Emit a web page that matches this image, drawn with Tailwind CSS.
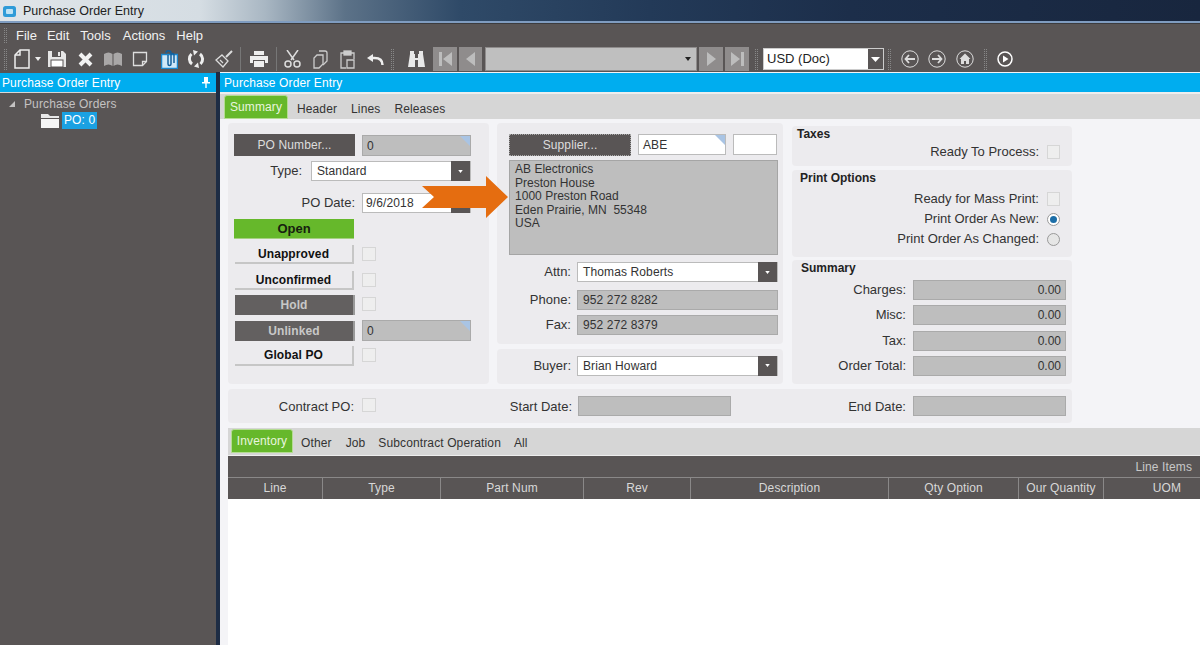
<!DOCTYPE html>
<html lang="en">
<head>
<meta charset="UTF-8">
<title>Purchase Order Entry</title>
<script src="https://cdn.jsdelivr.net/npm/@tailwindcss/browser@4"></script>
</head>
<body class="w-[1200px] h-[645px] overflow-hidden relative bg-[#595555] font-['Liberation_Sans',Arial,sans-serif] text-[12px] text-[#333] tracking-[.12px]">

<!-- title bar -->
<div class="h-[23px] pt-[1px] flex items-center bg-[linear-gradient(90deg,#dfe4e8_0px,#d5dde3_200px,#a9b7c3_265px,#5c7288_345px,#2f4a68_460px,#233a58_650px,#1c2e4a_850px,#18263e_1200px)] border-b-2 border-b-[#7f9cc0]">
  <svg class="ml-[3px] w-[13px] h-[11px]" viewBox="0 0 13 11"><rect width="13" height="11" rx="2.5" fill="#2f9bd8"/><rect x="3" y="3" width="7" height="5" rx="1" fill="#bfe3f5"/></svg>
  <span class="ml-[7px] text-[12.5px] tracking-[0px] text-[#222]">Purchase Order Entry</span>
</div>

<!-- menu -->
<div class="h-[24px] flex items-center text-[13px] tracking-[0px] text-[#f2f2f2] border-t border-t-[#3c3c3e]">
  <div class="ml-[4px] w-[3px] h-[15px] border-x border-dotted border-[#888]"></div>
  <span class="ml-[9px]">File</span>
  <span class="ml-[10px]">Edit</span>
  <span class="ml-[11px]">Tools</span>
  <span class="ml-[12px]">Actions</span>
  <span class="ml-[11px]">Help</span>
</div>

<!-- toolbar -->
<div class="h-[25px] pb-[1px] flex items-center text-[#f0f0f0]">
  <div class="ml-[4px] w-[3px] h-[21px] border-x border-dotted border-[#888]"></div>
  <svg class="ml-[7px] w-[16px] h-[20px]" viewBox="0 0 16 20" fill="none" stroke="#eee" stroke-width="1.5"><path d="M6 1h9v18H1V6z"/><path d="M6 1v5H1"/></svg>
  <svg class="ml-[5px] w-[6px] h-[4px]" viewBox="0 0 6 4"><path d="M0 0h6L3 4z" fill="#eee"/></svg>
  <svg class="ml-[7px] w-[18px] h-[18px]" viewBox="0 0 18 18"><path d="M0 1h15l3 3v13H0z" fill="#e6e6e6"/><rect x="4" y="1" width="9" height="6" fill="#595555"/><rect x="10" y="2" width="2" height="4" fill="#e6e6e6"/><rect x="3" y="10" width="12" height="7" fill="#fff" stroke="#595555"/></svg>
  <svg class="ml-[12px] w-[15px] h-[15px]" viewBox="0 0 15 15"><path d="M2 2l11 11M13 2L2 13" stroke="#f2f2f2" stroke-width="4"/></svg>
  <svg class="ml-[11px] w-[18px] h-[14px]" viewBox="0 0 18 14"><path d="M0 2c3-2 6-2 8.500 0v12C6 12 3 12 0 14zM18 2c-3-2-6-2-8.500 0v12c2.500-2 5.500-2 8.500 0z" fill="#a9a7a7"/></svg>
  <svg class="ml-[10px] w-[16px] h-[16px]" viewBox="0 0 16 16" fill="none" stroke="#ddd" stroke-width="1.3"><path d="M1.500 1.500h13v9l-4 4h-9z"/><path d="M14.500 10.500h-4v4"/></svg>
  <svg class="ml-[13px] w-[17px] h-[19px]" viewBox="0 0 17 19"><rect x="0.500" y="4.500" width="16" height="14" fill="#cfe8f8" stroke="#1a88d0" stroke-width="1.500"/><path d="M5 3c0-3 5-3 5 0v11c0 2-3 2-3 0V5M10 5c0-2 3-2 3 0v8" fill="none" stroke="#14609c" stroke-width="1.500"/></svg>
  <svg class="ml-[9px] w-[18px] h-[18px]" viewBox="0 0 18 18" fill="none" stroke="#eee" stroke-width="3"><path d="M5 14a6.500 6.500 0 0 1-.5-10"/><path d="M13 4a6.500 6.500 0 0 1 .5 10"/><path d="M6 0l5 1.500-4 4zM12 18l-5-1.500 4-4z" fill="#eee" stroke="none"/></svg>
  <svg class="ml-[10px] w-[18px] h-[18px]" viewBox="0 0 18 18" fill="none" stroke="#ddd" stroke-width="1.3"><path d="M11 7l6-6" stroke-width="2"/><path d="M7 5l6 6-5 6-7-7z"/><path d="M5 10l3 3"/></svg>
  <div class="ml-[7px] w-px h-[24px] bg-[#777]"></div>
  <svg class="ml-[9px] w-[18px] h-[16px]" viewBox="0 0 18 16"><rect x="4" y="0" width="10" height="4" fill="#eee"/><path d="M0 5h18v7h-3V9H3v3H0z" fill="#eee"/><rect x="4" y="10" width="10" height="6" fill="#eee"/></svg>
  <div class="ml-[8px] w-px h-[24px] bg-[#777]"></div>
  <svg class="ml-[7px] w-[17px] h-[18px]" viewBox="0 0 17 18" fill="none" stroke="#ddd" stroke-width="1.500"><path d="M3 0l7 10M14 0L7 10"/><circle cx="4" cy="14" r="3"/><circle cx="13" cy="14" r="3"/></svg>
  <svg class="ml-[12px] w-[15px] h-[19px]" viewBox="0 0 15 19" fill="none" stroke="#ccc" stroke-width="1.300"><path d="M6 1h6a2 2 0 0 1 2 2v8l-4 4"/><path d="M4 5h6v9l-4 4H1V8z"/></svg>
  <svg class="ml-[12px] w-[15px] h-[19px]" viewBox="0 0 15 19" fill="none" stroke="#ccc" stroke-width="1.300"><path d="M5 3H1v15h5"/><path d="M10 3h4v6"/><rect x="4" y="1" width="7" height="4" fill="#ccc"/><path d="M7 10h7v8H7z"/></svg>
  <svg class="ml-[12px] w-[17px] h-[11px]" viewBox="0 0 17 11" fill="none"><path d="M15.500 11c0-5-3-7-8-7H5" stroke="#eee" stroke-width="2.500"/><path d="M6 0v8L0 4z" fill="#eee"/></svg>
  <div class="ml-[7px] w-[3px] h-[21px] border-x border-dotted border-[#888]"></div>
  <svg class="ml-[14px] w-[17px] h-[16px]" viewBox="0 0 17 16"><path d="M2 0h4v3h1v4h3V3h1V0h4v3l2 13h-7V9H7v7H0L2 3z" fill="#e8e8e8"/></svg>
  <div class="ml-[8px] w-[24px] h-[24px] bg-[#8f8c8c] flex items-center justify-center"><svg class="w-[13px] h-[14px]" viewBox="0 0 13 14"><path d="M0 0h3v14H0zM13 0v14L4 7z" fill="#bdbdbd"/></svg></div>
  <div class="ml-[2px] w-[23px] h-[24px] bg-[#8f8c8c] flex items-center justify-center"><svg class="w-[9px] h-[14px]" viewBox="0 0 9 14"><path d="M9 0v14L0 7z" fill="#bdbdbd"/></svg></div>
  <div class="ml-[3px] w-[212px] h-[24px] bg-[#bfbfbf] border border-[#8f8c8c] flex items-center justify-end pr-[5px]"><svg class="w-[6px] h-[4px]" viewBox="0 0 6 4"><path d="M0 0h6L3 4z" fill="#222"/></svg></div>
  <div class="ml-[2px] w-[24px] h-[24px] bg-[#8f8c8c] flex items-center justify-center"><svg class="w-[9px] h-[14px]" viewBox="0 0 9 14"><path d="M0 0v14l9-7z" fill="#bdbdbd"/></svg></div>
  <div class="ml-[2px] w-[24px] h-[24px] bg-[#8f8c8c] flex items-center justify-center"><svg class="w-[13px] h-[14px]" viewBox="0 0 13 14"><path d="M10 0h3v14h-3zM0 0v14l9-7z" fill="#bdbdbd"/></svg></div>
  <div class="ml-[6px] w-[3px] h-[21px] border-x border-dotted border-[#888]"></div>
  <div class="ml-[5px] w-[121px] h-[22px] bg-white border border-[#ccc] flex items-center justify-between text-[13px] tracking-[0px] text-[#222]">
    <span class="ml-[3px]">USD (Doc)</span>
    <span class="w-[15px] h-[20px] bg-[#595555] flex items-center justify-center"><svg class="w-[9px] h-[5px]" viewBox="0 0 9 5"><path d="M0 0h9L4.500 5z" fill="#fff"/></svg></span>
  </div>
  <div class="ml-[4px] w-[3px] h-[21px] border-x border-dotted border-[#888]"></div>
  <svg class="ml-[10px] w-[18px] h-[18px]" viewBox="0 0 18 18" fill="none" stroke="#ddd"><circle cx="9" cy="9" r="8.200"/><path d="M14 9H5M8 5L4.500 9 8 13" stroke-width="1.800"/></svg>
  <svg class="ml-[9px] w-[18px] h-[18px]" viewBox="0 0 18 18" fill="none" stroke="#ddd"><circle cx="9" cy="9" r="8.200"/><path d="M4 9h9M10 5l3.500 4L10 13" stroke-width="1.800"/></svg>
  <svg class="ml-[10px] w-[18px] h-[18px]" viewBox="0 0 18 18"><circle cx="9" cy="9" r="8.200" fill="none" stroke="#ddd"/><path d="M9 3.500L3.500 9H5v5h3v-3h2v3h3V9h1.500z" fill="#ddd"/></svg>
  <div class="ml-[10px] w-[3px] h-[21px] border-x border-dotted border-[#888]"></div>
  <svg class="ml-[10px] w-[16px] h-[16px]" viewBox="0 0 16 16"><circle cx="8" cy="8" r="7" fill="none" stroke="#fff" stroke-width="1.500"/><path d="M6 4.500v7l5.500-3.500z" fill="#fff"/></svg>
</div>

<div class="flex h-[573px]">
  <!-- left tree -->
  <div class="w-[216px] shrink-0">
    <div class="h-[19px] mt-px bg-[#00adef] text-white flex items-center justify-between pl-[2px] pr-[6px]">
      <span>Purchase Order Entry</span>
      <svg class="w-[8px] h-[11px]" viewBox="0 0 8 11"><path d="M2 0h4v5h2v1.500H4.700V11H3.300V6.500H0V5h2z" fill="#fff"/></svg>
    </div>
    <div class="h-px bg-[#d8d8d8]"></div>
    <div class="h-[19px] pt-[2px] flex items-center text-[#c4c2c2]">
      <svg class="ml-[9px] w-[6px] h-[6px]" viewBox="0 0 6 6"><path d="M6 0v6H0z" fill="#c4c2c2"/></svg>
      <span class="ml-[9px]">Purchase Orders</span>
    </div>
    <div class="h-[17px] flex items-center">
      <svg class="ml-[41px] w-[18px] h-[14px]" viewBox="0 0 18 14"><path d="M0 0h7l2 2h9v2H0z" fill="#e8e8e8"/><rect y="5" width="18" height="9" fill="#f5f5f5"/></svg>
      <span class="ml-[3px] h-[17px] px-[2px] bg-[#1ba1e2] text-white leading-[17px]">PO: 0</span>
    </div>
  </div>
  <div class="w-[4px] shrink-0 bg-[#1d2c44]"></div>

  <!-- main -->
  <div class="flex-1 min-w-0 bg-[#f4f4f7]">
    <div class="h-[19px] mt-px bg-[#00adef] text-white flex items-center pl-[4px]">Purchase Order Entry</div>
    <div class="h-[2px] bg-[#eee]"></div>
    <div class="h-[25px] bg-[#d6d6d6] flex items-end text-[#333]">
      <div class="ml-[4px] w-[64px] h-[24px] bg-[#66b82b] border border-[#b5dc93] rounded-t-[3px] text-[#e9f5df] flex items-center justify-center">Summary</div>
      <span class="ml-[9px] mb-[1px]">Header</span>
      <span class="ml-[14px] mb-[1px]">Lines</span>
      <span class="ml-[14px] mb-[1px]">Releases</span>
    </div>

    <!-- form -->
    <div class="h-[309px] pt-[4px] pl-[8px]">
      <div class="flex h-[261px]">
        <!-- status column -->
        <div class="w-[261px] h-[261px] bg-[#ecebee] rounded-[4px] pt-[11px] pl-[6px] shrink-0">
          <div class="flex h-[22px]">
            <div class="w-[121px] h-[22px] bg-[#595555] text-[#ddd] flex items-center justify-center">PO Number...</div>
            <div class="ml-[7px] w-[109px] h-[21px] mt-px bg-[#bebebe] border border-[#aaa] flex items-center pl-[4px] relative">0<span class="absolute top-0 right-0 border-t-[10px] border-l-[10px] border-t-[#a9c4e4] border-l-transparent"></span></div>
          </div>
          <div class="flex items-center h-[20px] mt-[5px]">
            <span class="w-[68px] text-right text-[13px] tracking-[0px]">Type:</span>
            <div class="ml-[9px] w-[160px] h-[20px] bg-white border border-[#bbb] flex items-center justify-between pl-[5px]"><span>Standard</span><span class="w-[19px] h-[20px] bg-[#595555] flex items-center justify-center"><svg class="w-[5px] h-[3px]" viewBox="0 0 6 4"><path d="M0 0h6L3 4z" fill="#fff"/></svg></span></div>
          </div>
          <div class="flex items-center h-[20px] mt-[12px]">
            <span class="w-[121px] text-right text-[13px] tracking-[0px]">PO Date:</span>
            <div class="ml-[7px] w-[109px] h-[20px] bg-white border border-[#bbb] flex items-center justify-between pl-[3px]"><span>9/6/2018</span><span class="w-[19px] h-[20px] bg-[#595555]"></span></div>
          </div>
          <div class="w-[120px] h-[20px] mt-[6px] bg-[#66b82b] border-b border-[#a5d080] text-[13px] tracking-[0px] font-bold text-[#17210f] flex items-center justify-center">Open</div>
          <div class="flex h-[19px] mt-[6px] ml-px">
            <div class="w-[119px] h-[19px] border-r-2 border-b-2 border-[#c6c6c6] font-bold text-[#111] flex items-center justify-center">Unapproved</div>
            <div class="ml-[8px] mt-[2px] w-[14px] h-[14px] border border-[#d6d6d6] bg-[#eeeeee]"></div>
          </div>
          <div class="flex h-[19px] mt-[7px] ml-px">
            <div class="w-[119px] h-[19px] border-r-2 border-b-2 border-[#c6c6c6] font-bold text-[#111] flex items-center justify-center">Unconfirmed</div>
            <div class="ml-[8px] mt-[2px] w-[14px] h-[14px] border border-[#d6d6d6] bg-[#eeeeee]"></div>
          </div>
          <div class="flex h-[20px] mt-[5px] ml-px">
            <div class="w-[120px] h-[20px] border-r-2 border-[#999] bg-[#636060] font-bold text-[#c8c8c8] flex items-center justify-center">Hold</div>
            <div class="ml-[7px] mt-[2px] w-[14px] h-[14px] border border-[#d6d6d6] bg-[#eeeeee]"></div>
          </div>
          <div class="flex h-[21px] mt-[5px] ml-px">
            <div class="w-[120px] h-[20px] mt-px border-r-2 border-[#999] bg-[#636060] font-bold text-[#c8c8c8] flex items-center justify-center">Unlinked</div>
            <div class="ml-[7px] w-[109px] h-[21px] bg-[#bebebe] border border-[#aaa] flex items-center pl-[4px] relative">0<span class="absolute top-0 right-0 border-t-[10px] border-l-[10px] border-t-[#a9c4e4] border-l-transparent"></span></div>
          </div>
          <div class="flex h-[20px] mt-[5px] ml-px">
            <div class="w-[119px] h-[20px] border-r-2 border-b-2 border-[#c6c6c6] font-bold text-[#111] flex items-center justify-center">Global PO</div>
            <div class="ml-[8px] mt-[2px] w-[14px] h-[14px] border border-[#d6d6d6] bg-[#eeeeee]"></div>
          </div>
        </div>

        <!-- supplier column -->
        <div class="ml-[8px] w-[286px] shrink-0">
          <div class="h-[221px] bg-[#ecebee] rounded-[4px] pt-[11px] pl-[12px]">
            <div class="flex h-[22px]">
              <div class="w-[122px] h-[22px] bg-[#595555] border border-dotted border-[#aaa] text-[#ddd] flex items-center justify-center">Supplier...</div>
              <div class="ml-[7px] w-[88px] h-[21px] bg-white border border-[#bbb] flex items-center pl-[4px] relative">ABE<span class="absolute top-0 right-0 border-t-[10px] border-l-[10px] border-t-[#a9c4e4] border-l-transparent"></span></div>
              <div class="ml-[7px] w-[44px] h-[21px] bg-white border border-[#bbb]"></div>
            </div>
            <div class="w-[269px] h-[95px] mt-[4px] bg-[#bebebe] border border-[#a5a5a5] pl-[5px] pt-[2px] leading-[13.500px] tracking-[.02px] whitespace-pre">AB Electronics
Preston House
1000 Preston Road
Eden Prairie, MN  55348
USA</div>
            <div class="flex items-center h-[20px] mt-[7px]">
              <span class="w-[62px] text-right text-[13px] tracking-[0px]">Attn:</span>
              <div class="ml-[6px] w-[201px] h-[20px] bg-white border border-[#bbb] flex items-center justify-between pl-[5px]"><span>Thomas Roberts</span><span class="w-[19px] h-[20px] bg-[#595555] flex items-center justify-center"><svg class="w-[5px] h-[3px]" viewBox="0 0 6 4"><path d="M0 0h6L3 4z" fill="#fff"/></svg></span></div>
            </div>
            <div class="flex items-center h-[20px] mt-[8px]">
              <span class="w-[62px] text-right text-[13px] tracking-[0px]">Phone:</span>
              <div class="ml-[6px] w-[201px] h-[20px] bg-[#bebebe] border border-[#aaa] flex items-center pl-[5px]">952 272 8282</div>
            </div>
            <div class="flex items-center h-[20px] mt-[5px]">
              <span class="w-[62px] text-right text-[13px] tracking-[0px]">Fax:</span>
              <div class="ml-[6px] w-[201px] h-[20px] bg-[#bebebe] border border-[#aaa] flex items-center pl-[5px]">952 272 8379</div>
            </div>
          </div>
          <div class="h-[35px] mt-[5px] pb-[2px] bg-[#ecebee] rounded-[4px] flex items-center pl-[12px]">
            <span class="w-[62px] text-right text-[13px] tracking-[0px]">Buyer:</span>
            <div class="ml-[6px] w-[201px] h-[20px] bg-white border border-[#bbb] flex items-center justify-between pl-[5px]"><span>Brian Howard</span><span class="w-[19px] h-[20px] bg-[#595555] flex items-center justify-center"><svg class="w-[5px] h-[3px]" viewBox="0 0 6 4"><path d="M0 0h6L3 4z" fill="#fff"/></svg></span></div>
          </div>
        </div>

        <!-- taxes, print, summary column -->
        <div class="ml-[9px] w-[280px] shrink-0 pt-[3px] text-[13px] tracking-[0px]">
          <div class="h-[40px] bg-[#ecebee] rounded-[4px] pl-[5px] pt-[1px]">
            <div class="font-bold text-[12px] text-[#222] leading-[14px]">Taxes</div>
            <div class="flex items-center justify-end h-[14px] mt-[4px]">
              <span>Ready To Process:</span>
              <span class="ml-[8px] mr-[12px] w-[13px] h-[14px] border border-[#d6d6d6] bg-[#eeeeee]"></span>
            </div>
          </div>
          <div class="h-[87px] mt-[4px] bg-[#ecebee] rounded-[4px] pl-[8px] pt-[1px]">
            <div class="font-bold text-[12px] text-[#222] leading-[14px]">Print Options</div>
            <div class="flex items-center justify-end h-[14px] mt-[7px]">
              <span>Ready for Mass Print:</span>
              <span class="ml-[8px] mr-[12px] w-[13px] h-[14px] border border-[#d6d6d6] bg-[#eeeeee]"></span>
            </div>
            <div class="flex items-center justify-end h-[14px] mt-[6px]">
              <span>Print Order As New:</span>
              <span class="ml-[8px] mr-[12px] w-[13px] h-[13px] rounded-full border border-[#999] bg-white flex items-center justify-center"><span class="w-[7px] h-[7px] rounded-full bg-[#1c6ea8]"></span></span>
            </div>
            <div class="flex items-center justify-end h-[14px] mt-[6px]">
              <span>Print Order As Changed:</span>
              <span class="ml-[8px] mr-[12px] w-[13px] h-[13px] rounded-full border border-[#999] bg-[#e6e6e6]"></span>
            </div>
          </div>
          <div class="h-[124px] mt-[3px] bg-[#ecebee] rounded-[4px] pl-[9px] pt-[1px]">
            <div class="font-bold text-[12px] text-[#222] leading-[14px]">Summary</div>
            <div class="flex items-center justify-end h-[20px] mt-[5px] pr-[6px]">
              <span>Charges:</span>
              <span class="ml-[7px] w-[153px] h-[20px] bg-[#bebebe] border border-[#aaa] text-[12px] text-right pr-[4px] leading-[18px]">0.00</span>
            </div>
            <div class="flex items-center justify-end h-[20px] mt-[5px] pr-[6px]">
              <span>Misc:</span>
              <span class="ml-[7px] w-[153px] h-[20px] bg-[#bebebe] border border-[#aaa] text-[12px] text-right pr-[4px] leading-[18px]">0.00</span>
            </div>
            <div class="flex items-center justify-end h-[20px] mt-[6px] pr-[6px]">
              <span>Tax:</span>
              <span class="ml-[7px] w-[153px] h-[20px] bg-[#bebebe] border border-[#aaa] text-[12px] text-right pr-[4px] leading-[18px]">0.00</span>
            </div>
            <div class="flex items-center justify-end h-[20px] mt-[5px] pr-[6px]">
              <span>Order Total:</span>
              <span class="ml-[7px] w-[153px] h-[20px] bg-[#bebebe] border border-[#aaa] text-[12px] text-right pr-[4px] leading-[18px]">0.00</span>
            </div>
          </div>
        </div>
      </div>

      <!-- dates strip -->
      <div class="w-[844px] h-[34px] mt-[5px] bg-[#ecebee] rounded-[4px] flex items-center text-[13px] tracking-[0px]">
        <span class="w-[126px] pt-[2px] text-right">Contract PO:</span>
        <span class="ml-[8px] mb-[3px] w-[14px] h-[14px] border border-[#d6d6d6] bg-[#eeeeee]"></span>
        <span class="w-[196px] pt-[2px] text-right">Start Date:</span>
        <span class="ml-[6px] w-[153px] h-[20px] bg-[#bebebe] border border-[#aaa]"></span>
        <span class="w-[175px] pt-[2px] text-right">End Date:</span>
        <span class="ml-[7px] w-[153px] h-[20px] bg-[#bebebe] border border-[#aaa]"></span>
      </div>
    </div>

    <!-- line items -->
    <div class="ml-[8px]">
      <div class="h-[27px] bg-[#d6d6d6] flex items-start pt-px">
        <div class="ml-[3px] w-[62px] h-[24px] pb-[1px] bg-[#66b82b] border border-[#b5dc93] rounded-t-[3px] text-[#e9f5df] flex items-center justify-center">Inventory</div>
        <span class="ml-[8px] mt-[5px]">Other</span>
        <span class="ml-[14px] mt-[5px]">Job</span>
        <span class="ml-[13px] mt-[5px]">Subcontract Operation</span>
        <span class="ml-[13px] mt-[5px]">All</span>
      </div>
      <div class="h-px bg-[#eee]"></div>
      <div class="h-[21px] bg-[#595555] text-[#c8c8c8] text-right pr-[8px] leading-[22px]">Line Items</div>
      <div class="flex h-[22px] bg-[#595555] text-[#d8d8d8] border-t border-[#8a8888] overflow-hidden">
        <div class="w-[95px] shrink-0 border-r border-[#8a8888] text-center leading-[21px]">Line</div>
        <div class="w-[118px] shrink-0 border-r border-[#8a8888] text-center leading-[21px]">Type</div>
        <div class="w-[143px] shrink-0 border-r border-[#8a8888] text-center leading-[21px]">Part Num</div>
        <div class="w-[107px] shrink-0 border-r border-[#8a8888] text-center leading-[21px]">Rev</div>
        <div class="w-[198px] shrink-0 border-r border-[#8a8888] text-center leading-[21px]">Description</div>
        <div class="w-[130px] shrink-0 border-r border-[#8a8888] text-center leading-[21px]">Qty Option</div>
        <div class="w-[85px] shrink-0 border-r border-[#8a8888] text-center leading-[21px]">Our Quantity</div>
        <div class="w-[126px] shrink-0 text-center leading-[21px]">UOM</div>
      </div>
      <div class="h-[147px] bg-white"></div>
    </div>
  </div>
</div>

<!-- callout arrow over the form -->
<svg class="absolute left-[422px] top-[176px] w-[86px] h-[42px]" viewBox="0 0 86 42"><path d="M0 10h64V0l22 21-22 21V32H0l12-11z" fill="#e56d10"/></svg>

</body>
</html>
